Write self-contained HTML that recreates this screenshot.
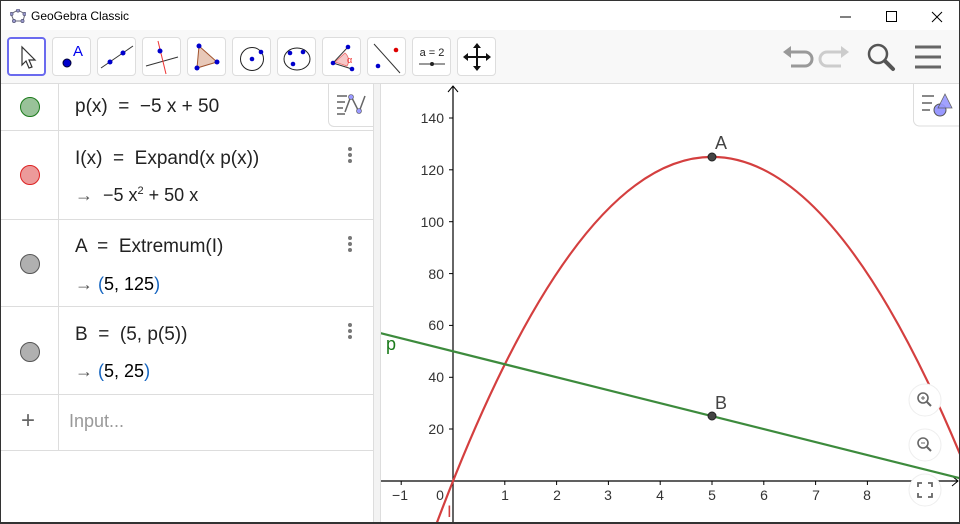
<!DOCTYPE html>
<html><head><meta charset="utf-8"><style>
*{margin:0;padding:0;box-sizing:border-box}
body{width:960px;height:524px;overflow:hidden;background:#fff;font-family:"Liberation Sans",sans-serif;position:relative}
.abs{position:absolute}
.title{left:0;top:0;width:960px;height:30px;background:#fff;border:1px solid #333;border-bottom:none}
.tb{left:1px;top:30px;width:958px;height:54px;background:#f8f8f8;border-bottom:1px solid #ddd}
.btn{position:absolute;top:7px;width:39px;height:39px;border:1px solid #ddd;border-radius:4px;background:#fff}
.alg{left:1px;top:84px;width:372px;height:440px;background:#fff}
.row{position:absolute;left:0;width:372px;border-bottom:1px solid #ddd}
.dotc{position:absolute;left:19px;width:20px;height:20px;border-radius:50%}
.txt{position:absolute;left:74px;font-size:19px;color:#222;white-space:nowrap}
.kebab{position:absolute;left:347px;width:4px}
.kebab i{display:block;width:4px;height:4px;border-radius:50%;background:#777;margin-bottom:2px}
.lab{font-size:14px;fill:#333;font-family:"Liberation Sans",sans-serif}
</style></head><body>
<div class="abs title">
<svg class="abs" style="left:9px;top:8px" width="16" height="14"><polygon points="8,1 15,5 13,12 4,12 1,5" fill="none" stroke="#667" stroke-width="1"/><g fill="#99c" stroke="#557" stroke-width=".7"><circle cx="8" cy="1.5" r="1.6"/><circle cx="14.5" cy="5" r="1.6"/><circle cx="12.5" cy="12" r="1.6"/><circle cx="4" cy="12" r="1.6"/><circle cx="1.5" cy="5" r="1.6"/></g></svg>
<div class="abs" style="left:30px;top:8px;font-size:12px;color:#000">GeoGebra Classic</div>
<svg class="abs" style="left:835px;top:8px" width="110" height="16"><line x1="4" y1="8" x2="15" y2="8" stroke="#000"/><rect x="50.5" y="2.5" width="10" height="10" fill="none" stroke="#000"/><path d="M96 3 L106 13 M106 3 L96 13" stroke="#000"/></svg>
</div>
<div class="abs" style="left:0;top:30px;width:1px;height:494px;background:#333"></div>
<div class="abs" style="left:959px;top:0;width:1px;height:524px;background:#333"></div>
<div class="abs tb">
<div class="btn" style="left:6px;border:2px solid #6a6aee"><svg width="36" height="36"><path d="M13 8 L13 26 L17 22 L20 29 L23 28 L20 21 L26 21 Z" fill="#fff" stroke="#333" stroke-width="1.2"/></svg></div>
<div class="btn" style="left:51px"><svg width="38" height="38"><circle cx="14" cy="25" r="4" fill="#0000cc" stroke="#003"/><text x="20" y="18" font-size="15" fill="#0000ee" font-family="Liberation Sans">A</text></svg></div>
<div class="btn" style="left:96px"><svg width="38" height="38"><line x1="3" y1="30" x2="35" y2="8" stroke="#333"/><circle cx="12" cy="24" r="2.5" fill="#0000cc"/><circle cx="25" cy="15" r="2.5" fill="#0000cc"/></svg></div>
<div class="btn" style="left:141px"><svg width="38" height="38"><line x1="3" y1="28" x2="35" y2="19" stroke="#333"/><line x1="15" y1="3" x2="23" y2="36" stroke="#e33"/><circle cx="17" cy="13" r="2.5" fill="#0000cc"/></svg></div>
<div class="btn" style="left:186px"><svg width="38" height="38"><polygon points="11,8 29,24 9,30" fill="#e8c8b8" stroke="#a0522d"/><circle cx="11" cy="8" r="2.5" fill="#0000cc"/><circle cx="29" cy="24" r="2.5" fill="#0000cc"/><circle cx="9" cy="30" r="2.5" fill="#0000cc"/></svg></div>
<div class="btn" style="left:231px"><svg width="38" height="38"><circle cx="19" cy="21" r="11.5" fill="none" stroke="#222"/><circle cx="19" cy="21" r="2.3" fill="#0000cc"/><circle cx="28" cy="14" r="2.3" fill="#0000cc"/></svg></div>
<div class="btn" style="left:276px"><svg width="38" height="38"><ellipse cx="19" cy="21" rx="13" ry="11" fill="none" stroke="#222"/><circle cx="12" cy="15" r="2.3" fill="#0000cc"/><circle cx="25" cy="14" r="2.3" fill="#0000cc"/><circle cx="15" cy="26" r="2.3" fill="#0000cc"/></svg></div>
<div class="btn" style="left:321px"><svg width="38" height="38"><path d="M12 24 L22 15 A10 10 0 0 1 24 28 Z" fill="#f6c8c8" stroke="#e66" stroke-width=".8"/><path d="M25 9 L10 25 L29 31" fill="none" stroke="#333"/><text x="24" y="25" font-size="9" fill="#e33">α</text><circle cx="25" cy="9" r="2.3" fill="#0000cc"/><circle cx="10" cy="25" r="2.3" fill="#0000cc"/><circle cx="29" cy="31" r="2.3" fill="#0000cc"/></svg></div>
<div class="btn" style="left:366px"><svg width="38" height="38"><line x1="6" y1="6" x2="32" y2="35" stroke="#333"/><circle cx="28" cy="12" r="2.3" fill="#d00"/><circle cx="10" cy="28" r="2.3" fill="#0000cc"/></svg></div>
<div class="btn" style="left:411px"><svg width="38" height="38"><text x="19" y="18" font-size="11" text-anchor="middle" fill="#222" font-family="Liberation Sans">a = 2</text><line x1="6" y1="26" x2="32" y2="26" stroke="#333"/><circle cx="19" cy="26" r="2" fill="#222"/></svg></div>
<div class="btn" style="left:456px"><svg width="38" height="38"><path d="M19 8 V30 M8 19 H30" stroke="#111" stroke-width="2"/><path d="M19 5 l-4 5 h8z M19 33 l-4 -5 h8z M5 19 l5 -4 v8z M33 19 l-5 -4 v8z" fill="#111"/></svg></div>
<svg class="abs" style="left:780px;top:10px" width="175" height="36"><path d="M8 12 H24 a7 7 0 0 1 0 14 H10" fill="none" stroke="#999" stroke-width="3"/><path d="M2 12 l8 -6 v12z" fill="#999"/><path d="M62 12 H46 a7 7 0 0 0 0 14 H60" fill="none" stroke="#ccc" stroke-width="3"/><path d="M68 12 l-8 -6 v12z" fill="#ccc"/><circle cx="97" cy="14" r="9" fill="none" stroke="#555" stroke-width="2.5"/><line x1="104" y1="21" x2="112" y2="29" stroke="#555" stroke-width="4" stroke-linecap="round"/><path d="M134 7 H160 M134 17 H160 M134 27 H160" stroke="#666" stroke-width="3"/></svg>
</div>
<div class="abs alg">
<div class="row" style="top:0;height:47px"><div class="dotc" style="top:13px;background:#99c299;border:1px solid #1a7a1a"></div><div class="txt" style="top:12px">p(x) &nbsp;= &nbsp;−5 x + 50</div></div>
<div class="row" style="top:47px;height:89px"><div class="dotc" style="top:34px;background:#ec9a9a;border:1px solid #d22"></div><div class="txt" style="top:17px">I(x) &nbsp;= &nbsp;Expand(x p(x))</div><div class="txt" style="top:54px;font-size:18px"><span style="color:#555">→</span> &nbsp;−5 x<sup style="font-size:11px">2</sup> + 50 x</div><div class="kebab" style="top:16px"><i></i><i></i><i></i></div></div>
<div class="row" style="top:136px;height:87px"><div class="dotc" style="top:34px;background:#b0b0b0;border:1px solid #555"></div><div class="txt" style="top:16px">A &nbsp;= &nbsp;Extremum(I)</div><div class="txt" style="top:54px;font-size:18px"><span style="color:#555">→</span> <span style="color:#1565c0">(</span><span style="color:#000">5, 125</span><span style="color:#1565c0">)</span></div><div class="kebab" style="top:16px"><i></i><i></i><i></i></div></div>
<div class="row" style="top:223px;height:88px"><div class="dotc" style="top:35px;background:#b0b0b0;border:1px solid #555"></div><div class="txt" style="top:17px">B &nbsp;= &nbsp;(5, p(5))</div><div class="txt" style="top:54px;font-size:18px"><span style="color:#555">→</span> <span style="color:#1565c0">(</span><span style="color:#000">5, 25</span><span style="color:#1565c0">)</span></div><div class="kebab" style="top:16px"><i></i><i></i><i></i></div></div>
<div class="row" style="top:311px;height:56px"><div class="txt" style="left:20px;top:12px;font-size:24px;color:#666">+</div><div class="txt" style="left:68px;top:16px;font-size:18px;color:#999">Input...</div></div>
<div class="abs" style="left:57px;top:0;width:1px;height:366px;background:#ddd"></div>
<div class="abs" style="left:327px;top:0;width:46px;height:43px;background:#fff;border:1px solid #ddd;border-top:none;border-right:none;border-radius:0 0 0 6px"><svg width="44" height="40"><path d="M8 12 H18 M8 18 H16 M8 24 H14 M8 30 H16" stroke="#888" stroke-width="2"/><path d="M16 28 L22 12 L30 28 L36 12" fill="none" stroke="#666" stroke-width="1.5"/><circle cx="22" cy="13" r="2.5" fill="#99f" stroke="#555" stroke-width=".6"/><circle cx="30" cy="27" r="2.5" fill="#99f" stroke="#555" stroke-width=".6"/></svg></div>
</div>
<div class="abs" style="left:373px;top:84px;width:8px;height:440px;background:#f3f3f3;border-left:1px solid #ddd;border-right:1px solid #ddd"></div>
<div class="abs" style="left:0;top:522px;width:960px;height:2px;background:#333"></div>
<svg class="abs" style="left:381px;top:84px" width="578" height="438" viewBox="381 84 578 438">
<line x1="453" y1="86" x2="453" y2="522" stroke="#000" stroke-width="1.2"/>
<path d="M448 92 L453 86 L458 92" fill="none" stroke="#000"/>
<line x1="381" y1="481" x2="958" y2="481" stroke="#000" stroke-width="1.2"/>
<path d="M952 476 L958 481 L952 486" fill="none" stroke="#000"/>
<g stroke="#000"><line x1="401.2" y1="481" x2="401.2" y2="485"/><line x1="504.8" y1="481" x2="504.8" y2="485"/><line x1="556.6" y1="481" x2="556.6" y2="485"/><line x1="608.4" y1="481" x2="608.4" y2="485"/><line x1="660.2" y1="481" x2="660.2" y2="485"/><line x1="712" y1="481" x2="712" y2="485"/><line x1="763.8" y1="481" x2="763.8" y2="485"/><line x1="815.6" y1="481" x2="815.6" y2="485"/><line x1="867.4" y1="481" x2="867.4" y2="485"/>
<line x1="449" y1="429" x2="453" y2="429"/><line x1="449" y1="377.3" x2="453" y2="377.3"/><line x1="449" y1="325.4" x2="453" y2="325.4"/><line x1="449" y1="273.6" x2="453" y2="273.6"/><line x1="449" y1="221.7" x2="453" y2="221.7"/><line x1="449" y1="169.8" x2="453" y2="169.8"/><line x1="449" y1="118" x2="453" y2="118"/></g>
<g class="lab" text-anchor="middle"><text x="400" y="500">−1</text><text x="440" y="500">0</text><text x="505" y="500">1</text><text x="557" y="500">2</text><text x="608" y="500">3</text><text x="660" y="500">4</text><text x="712" y="500">5</text><text x="764" y="500">6</text><text x="816" y="500">7</text><text x="867" y="500">8</text></g>
<g class="lab" text-anchor="end"><text x="444" y="434">20</text><text x="444" y="382">40</text><text x="444" y="330">60</text><text x="444" y="279">80</text><text x="444" y="227">100</text><text x="444" y="175">120</text><text x="444" y="123">140</text></g>
<path d="M432.3 535 Q712 -221.2 991.7 535" fill="none" stroke="#d43f3f" stroke-width="2.2"/>
<line x1="380" y1="333" x2="971" y2="481" stroke="#3d8b3d" stroke-width="2.2"/>
<circle cx="712" cy="157" r="4" fill="#444" stroke="#222"/>
<circle cx="712" cy="416" r="4" fill="#444" stroke="#222"/>
<text x="715" y="149" font-size="18" fill="#444" font-family="Liberation Sans">A</text>
<text x="715" y="409" font-size="18" fill="#444" font-family="Liberation Sans">B</text>
<text x="386" y="350" font-size="18" fill="#1a7a1a" font-family="Liberation Sans">p</text>
<text x="447" y="517" font-size="17" fill="#d43f3f" font-family="Liberation Sans">I</text>
<g><circle cx="925" cy="400" r="16" fill="#fff" stroke="#eee"/><circle cx="923" cy="398" r="5" fill="none" stroke="#666" stroke-width="1.6"/><line x1="927" y1="402" x2="931" y2="406" stroke="#666" stroke-width="2"/><path d="M921 398 h4 M923 396 v4" stroke="#666"/>
<circle cx="925" cy="445" r="16" fill="#fff" stroke="#eee"/><circle cx="923" cy="443" r="5" fill="none" stroke="#666" stroke-width="1.6"/><line x1="927" y1="447" x2="931" y2="451" stroke="#666" stroke-width="2"/><path d="M921 443 h4" stroke="#666"/>
<circle cx="925" cy="490" r="16" fill="#fff" stroke="#eee"/><path d="M918 487 v-4 h4 M928 483 h4 v4 M932 493 v4 h-4 M922 497 h-4 v-4" fill="none" stroke="#666" stroke-width="1.8"/></g>
<path d="M913.5 84 V120 a6 6 0 0 0 6 6 H959" fill="#fff" stroke="#ddd"/>
<path d="M922 96 H934 M922 103 H932 M922 110 H930" stroke="#888" stroke-width="2"/>
<circle cx="940" cy="110" r="6" fill="#99f" stroke="#555"/>
<polygon points="945,94 952,108 938,108" fill="#99f" stroke="#555" stroke-width=".8" opacity=".9"/>
</svg>
</body></html>
